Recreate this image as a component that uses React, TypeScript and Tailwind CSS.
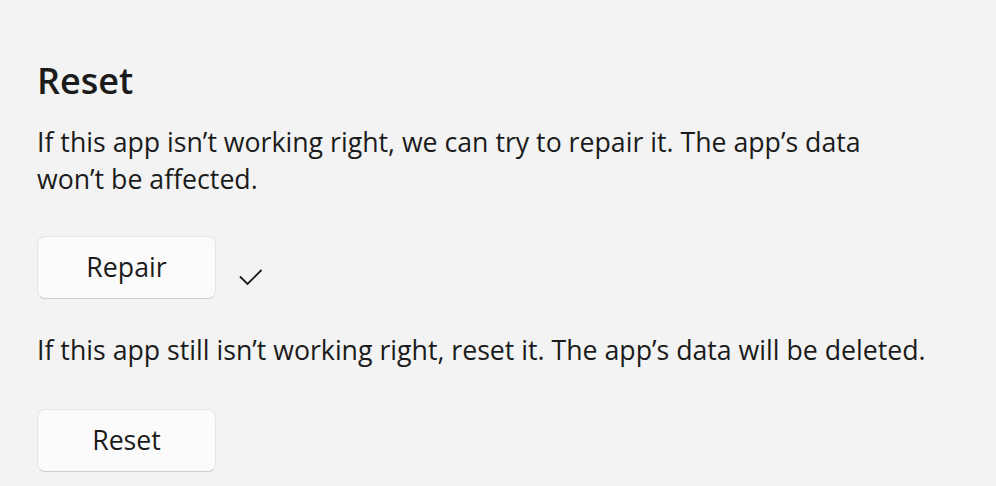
function ActionButton({ label }: { label: string }) {
  return (
    <button className="h-[63px] w-[179px] rounded-[8px] border border-[#e5e5e5] border-b-[#cccccc] bg-[#fbfbfb] text-[26.7px] text-[#1b1b1b]">
      {label}
    </button>
  );
}

export default function App() {
  return (
    <div className="min-h-screen bg-[#f3f3f3] pl-[37px] pt-[57px] font-['Segoe_UI','Open_Sans',sans-serif] text-[#1b1b1b]">
      <div className="w-[896px]">
        <h2 className="text-[36px] font-semibold leading-[48px]">Reset</h2>
        <p className="mt-[18px] text-[26.7px] leading-[37px]">
          If this app isn’t working right, we can try to repair it. The app’s data won’t be affected.
        </p>
        <div className="mt-[39px] flex items-center gap-[23px]">
          <ActionButton label="Repair" />
          <svg width="24" height="18" viewBox="0 0 24 18" className="mt-[20px]" fill="none" stroke="#1b1b1b" strokeWidth="1.8">
            <path d="M1 7.5 L8.5 15 L22.5 1" />
          </svg>
        </div>
        <p className="mt-[32px] text-[26.7px] leading-[37px]">
          If this app still isn’t working right, reset it. The app’s data will be deleted.
        </p>
        <div className="mt-[41px]">
          <ActionButton label="Reset" />
        </div>
      </div>
    </div>
  );
}
